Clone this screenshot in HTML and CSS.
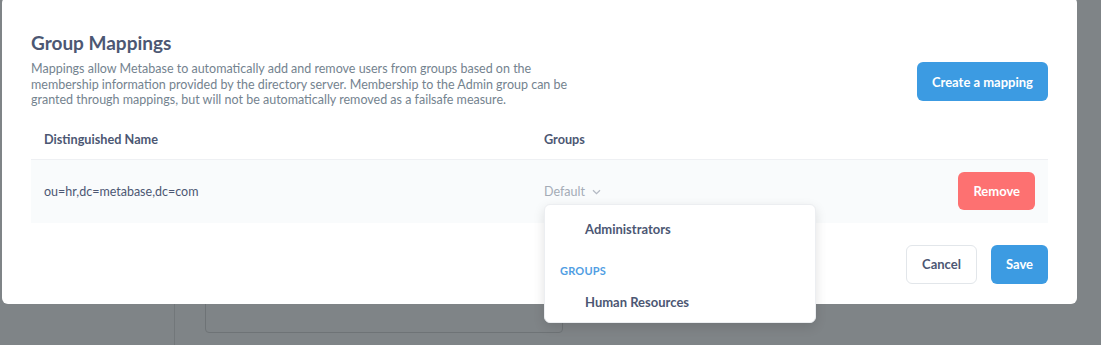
FILE: index.html
```html
<!DOCTYPE html>
<html lang="en">
<head>
  <meta charset="UTF-8">
  <title>Group Mappings</title>
  <link rel="stylesheet" href="styles.css">
</head>
<body>

  <!-- page behind the modal -->
  <div class="page">
    <div class="sidebar"></div>
    <div class="page-main">
      <div class="page-box"></div>
    </div>
  </div>

  <div class="modal">
    <h2 class="modal-title">Group Mappings</h2>
    <div class="modal-intro">
      <p class="modal-desc">
        Mappings allow Metabase to automatically add and remove users from groups based on the
        membership information provided by the directory server. Membership to the Admin group can be
        granted through mappings, but will not be automatically removed as a failsafe measure.
      </p>
      <button class="btn btn-primary btn-create">Create a mapping</button>
    </div>

    <div class="mapping-table">
      <div class="table-head">
        <div class="cell">Distinguished Name</div>
        <div class="cell">Groups</div>
        <div class="cell"></div>
      </div>
      <div class="table-row">
        <div class="cell">ou=hr,dc=metabase,dc=com</div>
        <div class="cell">
          <span class="group-select">
            Default
            <svg class="chevron" width="9" height="6" viewBox="0 0 9 6"><path d="M1 1.2 L4.5 4.6 L8 1.2" fill="none" stroke="#b4bac4" stroke-width="1.3"/></svg>
          </span>
        </div>
        <div class="cell cell-action">
          <button class="btn btn-danger">Remove</button>
        </div>

        <div class="popover">
          <div class="popover-item">Administrators</div>
          <div class="popover-section">Groups</div>
          <div class="popover-item">Human Resources</div>
        </div>
      </div>
    </div>

    <div class="modal-footer">
      <button class="btn btn-default">Cancel</button>
      <button class="btn btn-primary">Save</button>
    </div>
  </div>

</body>
</html>
```

FILE: styles.css
```css
* {
  box-sizing: border-box;
  margin: 0;
  padding: 0;
  font-family: 'Lato', 'Liberation Sans', sans-serif;
}

html, body {
  overflow: hidden;
}

body {
  background-color: #7f8487;
  height: 345px;
  position: relative;
}

/* page under the overlay */
.page {
  display: flex;
  height: 100%;
}

.sidebar {
  flex: none;
  width: 175px;
  border-right: 1px solid #72777a;
}

.page-main {
  flex: 1;
  padding-left: 30px;
}

.page-box {
  margin-top: 250px;
  width: 358px;
  height: 83px;
  border: 1px solid #6e7376;
  border-radius: 4px;
}

/* modal */
.modal {
  position: absolute;
  top: -3px;
  left: 2px;
  width: 1075px;
  background-color: #fff;
  border-radius: 6px;
  padding: 34px 29px 20px;
  color: #4c5773;
}

.modal-title {
  font-size: 19px;
  line-height: 24px;
  font-weight: 700;
  color: #4c5773;
}

.modal-intro {
  display: flex;
  justify-content: space-between;
  align-items: flex-start;
  margin-top: 6px;
}

.modal-desc {
  max-width: 540px;
  font-size: 12.5px;
  line-height: 15.5px;
  color: #74838f;
}

.btn {
  height: 39px;
  padding: 0 15px;
  border-radius: 6px;
  border: none;
  font-size: 13px;
  font-weight: 700;
  cursor: pointer;
}

.btn-primary {
  background-color: #3c9be2;
  color: #fff;
}

.btn-create {
  margin-top: 1px;
}

.btn-danger {
  height: 38px;
  background-color: #fd7171;
  color: #fff;
}

.btn-default {
  background-color: #fff;
  border: 1px solid #e2e6ea;
  color: #4c5773;
}

/* table */
.mapping-table {
  margin-top: 12px;
}

.table-head,
.table-row {
  display: grid;
  grid-template-columns: 500px 1fr auto;
  align-items: center;
  font-size: 12.5px;
}

.table-head {
  height: 40px;
  border-bottom: 1px solid #eef0f3;
  font-size: 12.7px;
  font-weight: 700;
}

.table-row {
  position: relative;
  height: 63px;
  background-color: #f9fbfc;
}

.cell {
  padding-left: 13px;
}

.cell-action {
  padding-right: 13px;
}

.group-select {
  color: #a4abb6;
  display: inline-flex;
  align-items: center;
  gap: 7px;
}

.chevron {
  margin-top: 1px;
}

/* dropdown */
.popover {
  position: absolute;
  top: 44px;
  left: 513px;
  width: 272px;
  padding: 6px 0 2px;
  background-color: #fff;
  border: 1px solid #eceef1;
  border-radius: 6px;
  box-shadow: 0 4px 12px rgba(0,0,0,0.12);
  z-index: 2;
}

.popover-item {
  height: 36px;
  line-height: 36px;
  padding-left: 40px;
  font-weight: 700;
  font-size: 13px;
  color: #4c5773;
}

.popover-section {
  margin-top: 17px;
  margin-bottom: 6px;
  height: 14px;
  line-height: 14px;
  padding-left: 15px;
  font-size: 11px;
  font-weight: 700;
  letter-spacing: 0.2px;
  text-transform: uppercase;
  color: #509ee3;
}

.modal-footer {
  display: flex;
  justify-content: flex-end;
  gap: 14px;
  margin-top: 22px;
}
```
